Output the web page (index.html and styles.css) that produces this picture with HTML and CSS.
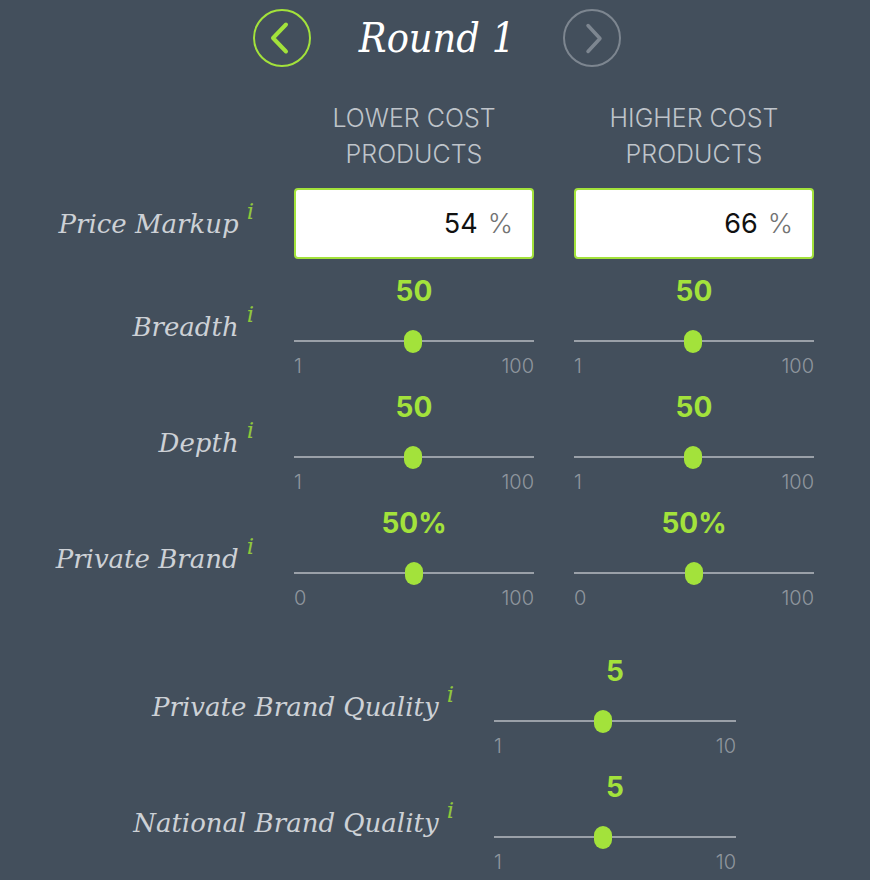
FILE: index.html
```html
<!DOCTYPE html>
<html lang="en">
<head>
<meta charset="utf-8">
<title>Round 1</title>
<link rel="stylesheet" href="styles.css">
</head>
<body>
<main class="page">
  <header class="round-nav">
    <button class="nav-btn nav-prev" aria-label="Previous round">
      <svg viewBox="0 0 58 58" width="58" height="58"><circle cx="29" cy="29" r="28" fill="none" stroke="currentColor" stroke-width="2"/><path d="M33 15.5 L20 29 L33 42.5" fill="none" stroke="currentColor" stroke-width="4" stroke-linecap="round" stroke-linejoin="round"/></svg>
    </button>
    <h1 class="round-title">Round 1</h1>
    <button class="nav-btn nav-next" aria-label="Next round">
      <svg viewBox="0 0 58 58" width="58" height="58"><circle cx="29" cy="29" r="28" fill="none" stroke="currentColor" stroke-width="2"/><path d="M25 16.5 L37 29.5 L25 42.5" fill="none" stroke="currentColor" stroke-width="3.5" stroke-linecap="round" stroke-linejoin="round"/></svg>
    </button>
  </header>

  <section class="grid grid-products">
    <div class="grid-blank"></div>
    <div class="col-head">LOWER COST<br>PRODUCTS</div>
    <div class="col-head">HIGHER COST<br>PRODUCTS</div>

    <div class="label label-input">Price Markup<sup class="info">i</sup></div>
    <div class="num-input"><span class="num">54</span><span class="unit">%</span></div>
    <div class="num-input"><span class="num">66</span><span class="unit">%</span></div>

    <div class="label label-slider">Breadth<sup class="info">i</sup></div>
    <div class="slider">
      <div class="slider-value">50</div>
      <div class="track"><span class="thumb" style="--p:0.495"></span></div>
      <div class="range-ends"><span>1</span><span>100</span></div>
    </div>
    <div class="slider">
      <div class="slider-value">50</div>
      <div class="track"><span class="thumb" style="--p:0.495"></span></div>
      <div class="range-ends"><span>1</span><span>100</span></div>
    </div>

    <div class="label label-slider">Depth<sup class="info">i</sup></div>
    <div class="slider">
      <div class="slider-value">50</div>
      <div class="track"><span class="thumb" style="--p:0.495"></span></div>
      <div class="range-ends"><span>1</span><span>100</span></div>
    </div>
    <div class="slider">
      <div class="slider-value">50</div>
      <div class="track"><span class="thumb" style="--p:0.495"></span></div>
      <div class="range-ends"><span>1</span><span>100</span></div>
    </div>

    <div class="label label-slider">Private Brand<sup class="info">i</sup></div>
    <div class="slider">
      <div class="slider-value">50%</div>
      <div class="track"><span class="thumb" style="--p:0.5"></span></div>
      <div class="range-ends"><span>0</span><span>100</span></div>
    </div>
    <div class="slider">
      <div class="slider-value">50%</div>
      <div class="track"><span class="thumb" style="--p:0.5"></span></div>
      <div class="range-ends"><span>0</span><span>100</span></div>
    </div>
  </section>

  <section class="grid grid-quality">
    <div class="label label-slider">Private Brand Quality<sup class="info">i</sup></div>
    <div class="slider">
      <div class="slider-value">5</div>
      <div class="track"><span class="thumb" style="--p:0.4444"></span></div>
      <div class="range-ends"><span>1</span><span>10</span></div>
    </div>

    <div class="label label-slider">National Brand Quality<sup class="info">i</sup></div>
    <div class="slider">
      <div class="slider-value">5</div>
      <div class="track"><span class="thumb" style="--p:0.4444"></span></div>
      <div class="range-ends"><span>1</span><span>10</span></div>
    </div>
  </section>
</main>
</body>
</html>
```
FILE: styles.css
```css
html, body {
  margin: 0;
  padding: 0;
}
body {
  background: #434f5c;
  width: 870px;
  height: 880px;
  overflow: hidden;
  font-family: "Inter", "Liberation Sans", sans-serif;
}
.page {
  display: flex;
  flex-direction: column;
}
.round-nav {
  display: flex;
  justify-content: center;
  align-items: center;
  gap: 48px;
  padding-top: 9px;
  padding-left: 4px;
  height: 58px;
}
.nav-btn {
  width: 58px;
  height: 58px;
  padding: 0;
  margin: 0;
  border: 0;
  background: none;
  display: block;
}
.nav-btn svg { display: block; }
.nav-prev { color: #a3e23b; }
.nav-next { color: #7d8690; }
.round-title {
  margin: 0;
  font-family: "DejaVu Serif", "Liberation Serif", serif;
  font-style: italic;
  font-stretch: condensed;
  font-weight: 400;
  font-size: 41px;
  color: #ffffff;
  line-height: 58px;
}
.grid {
  display: grid;
  column-gap: 40px;
}
.grid-products {
  grid-template-columns: 254px 240px 240px;
  margin-top: 33px;
}
.grid-quality {
  grid-template-columns: 454px 242px;
  margin-top: 32px;
}
.col-head {
  text-align: center;
  font-size: 25px;
  font-weight: 300;
  line-height: 36px;
  color: #bfc4ca;
  margin-bottom: 16px;
}
.label {
  text-align: right;
  font-family: "DejaVu Serif", "Liberation Serif", serif;
  font-style: italic;
  font-size: 26px;
  color: #cdd1d6;
  line-height: 40px;
  white-space: nowrap;
}
.label-input {
  align-self: start;
  padding-top: 16px;
}
.label-slider {
  padding-top: 33px;
}
.info {
  color: #8fc73c;
  font-size: 23px;
  line-height: 0;
  vertical-align: 14px;
  margin-left: 8px;
}
.num-input {
  height: 67px;
  box-sizing: content-box;
  border: 2px solid #a3e23b;
  border-radius: 4px;
  background: #ffffff;
  display: flex;
  justify-content: flex-end;
  align-items: center;
  gap: 10px;
  padding-right: 19px;
  font-size: 27px;
  font-weight: 400;
  margin-bottom: 15px;
}
.num { color: #111111; }
.unit { color: #737373; font-weight: 300; }
.slider {
  display: flex;
  flex-direction: column;
  height: 116px;
}
.slider-value {
  height: 34px;
  line-height: 34px;
  text-align: center;
  font-size: 28px;
  font-weight: 700;
  color: #a3e23b;
}
.track {
  position: relative;
  margin-top: 22px;
  height: 23px;
}
.track::before {
  content: "";
  position: absolute;
  left: 0;
  right: 0;
  top: 10px;
  height: 2px;
  background: #9aa0a8;
}
.thumb {
  position: absolute;
  top: 0;
  width: 18px;
  height: 23px;
  border-radius: 9px;
  background: #a3e23b;
  left: calc(9px + (100% - 18px) * var(--p));
  transform: translateX(-50%);
}
.range-ends {
  display: flex;
  justify-content: space-between;
  margin-top: 2px;
  height: 22px;
  line-height: 22px;
  font-size: 20px;
  font-weight: 300;
  color: #8f969e;
}
```
